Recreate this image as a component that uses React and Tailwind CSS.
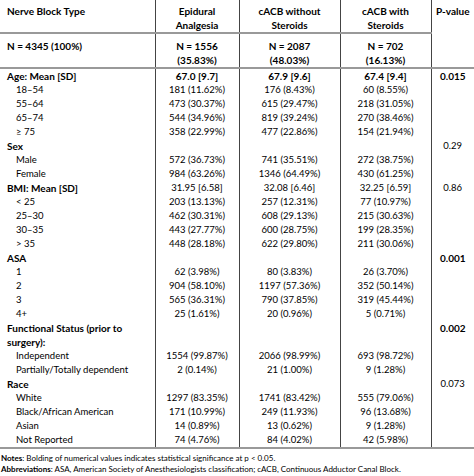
import React from "react";

const rows = [
  { label: "Age: Mean [SD]", group: true, bold: true, v: ["67.0 [9.7]", "67.9 [9.6]", "67.4 [9.4]"], p: "0.015", pBold: true },
  { label: "18–54", v: ["181 (11.62%)", "176 (8.43%)", "60 (8.55%)"] },
  { label: "55–64", v: ["473 (30.37%)", "615 (29.47%)", "218 (31.05%)"] },
  { label: "65–74", v: ["544 (34.96%)", "819 (39.24%)", "270 (38.46%)"] },
  { label: "≥ 75", v: ["358 (22.99%)", "477 (22.86%)", "154 (21.94%)"] },
  { label: "Sex", group: true, v: ["", "", ""], p: "0.29" },
  { label: "Male", v: ["572 (36.73%)", "741 (35.51%)", "272 (38.75%)"] },
  { label: "Female", v: ["984 (63.26%)", "1346 (64.49%)", "430 (61.25%)"] },
  { label: "BMI: Mean [SD]", group: true, v: ["31.95 [6.58]", "32.08 [6.46]", "32.25 [6.59]"], p: "0.86" },
  { label: "< 25", v: ["203 (13.13%)", "257 (12.31%)", "77 (10.97%)"] },
  { label: "25–30", v: ["462 (30.31%)", "608 (29.13%)", "215 (30.63%)"] },
  { label: "30–35", v: ["443 (27.77%)", "600 (28.75%)", "199 (28.35%)"] },
  { label: "> 35", v: ["448 (28.18%)", "622 (29.80%)", "211 (30.06%)"] },
  { label: "ASA", group: true, v: ["", "", ""], p: "0.001", pBold: true },
  { label: "1", v: ["62 (3.98%)", "80 (3.83%)", "26 (3.70%)"] },
  { label: "2", v: ["904 (58.10%)", "1197 (57.36%)", "352 (50.14%)"] },
  { label: "3", v: ["565 (36.31%)", "790 (37.85%)", "319 (45.44%)"] },
  { label: "4+", v: ["25 (1.61%)", "20 (0.96%)", "5 (0.71%)"] },
  {
    label: (
      <>
        Functional Status (prior to
        <br />
        surgery):
      </>
    ),
    group: true,
    v: ["", "", ""],
    p: "0.002",
    pBold: true,
  },
  { label: "Independent", v: ["1554 (99.87%)", "2066 (98.99%)", "693 (98.72%)"] },
  { label: "Partially/Totally dependent", v: ["2 (0.14%)", "21 (1.00%)", "9 (1.28%)"] },
  { label: "Race", group: true, v: ["", "", ""], p: "0.073" },
  { label: "White", v: ["1297 (83.35%)", "1741 (83.42%)", "555 (79.06%)"] },
  { label: "Black/African American", v: ["171 (10.99%)", "249 (11.93%)", "96 (13.68%)"] },
  { label: "Asian", v: ["14 (0.89%)", "13 (0.62%)", "9 (1.28%)"] },
  { label: "Not Reported", v: ["74 (4.76%)", "84 (4.02%)", "42 (5.98%)"] },
];

const vline = "border-r border-r-[#444]";
const rule = "border-b-2 border-b-[#999]";
const bold = "font-bold text-[10px]";

export default function App() {
  return (
    <div className="w-[474px] h-[476px] overflow-hidden bg-white text-black font-['Lato',sans-serif] text-[9.5px]">
      <table className="w-[474px] table-fixed border-collapse">
        <colgroup>
          <col className="w-[155px]" />
          <col className="w-[84px]" />
          <col className="w-[101px]" />
          <col className="w-[91px]" />
          <col className="w-[43px]" />
        </colgroup>
        <thead>
          {/* header */}
          <tr className={`${bold} leading-[14px] align-top`}>
            <th className={`text-left pl-[7px] pt-[4px] pb-[1px] h-[33px] ${rule} ${vline}`}>
              Nerve Block Type
            </th>
            <th className={`pt-[4px] ${rule} ${vline}`}>
              Epidural
              <br />
              Analgesia
            </th>
            <th className={`pt-[4px] ${rule} ${vline}`}>
              cACB without
              <br />
              Steroids
            </th>
            <th className={`pt-[4px] ${rule} ${vline}`}>
              cACB with
              <br />
              Steroids
            </th>
            <th rowSpan={2} className={`pt-[4px] ${rule}`}>
              P-value
            </th>
          </tr>
          {/* totals */}
          <tr className={`${bold} leading-[14px] align-top`}>
            <td className={`text-left pl-[7px] pt-[5px] pb-[2px] h-[35px] ${rule} ${vline}`}>
              N = 4345 (100%)
            </td>
            <td className={`text-center pt-[5px] ${rule} ${vline}`}>
              N = 1556
              <br />
              (35.83%)
            </td>
            <td className={`text-center pt-[5px] ${rule} ${vline}`}>
              N = 2087
              <br />
              (48.03%)
            </td>
            <td className={`text-center pt-[5px] ${rule} ${vline}`}>
              N = 702
              <br />
              (16.13%)
            </td>
          </tr>
        </thead>
        <tbody className="leading-[14px] align-top">
          {rows.map((r, i) => (
            <tr key={i} className={i === rows.length - 1 ? rule : ""}>
              <td className={`${r.group ? `pl-[7px] ${bold}` : "pl-[16px]"} ${vline}`}>{r.label}</td>
              {r.v.map((val, j) => (
                <td key={j} className={`text-center ${r.bold ? bold : ""} ${vline}`}>
                  {val}
                </td>
              ))}
              <td className={`text-center ${r.pBold ? bold : ""}`}>{r.p || ""}</td>
            </tr>
          ))}
        </tbody>
      </table>

      {/* notes */}
      <div className="pt-[4px] pl-[1px] text-[8px] leading-[10.5px]">
        <p>
          <span className="font-bold">Notes</span>: Bolding of numerical values indicates statistical significance at p &lt; 0.05.
        </p>
        <p>
          <span className="font-bold">Abbreviations</span>: ASA, American Society of Anesthesiologists classification; cACB, Continuous Adductor Canal Block.
        </p>
      </div>
    </div>
  );
}
